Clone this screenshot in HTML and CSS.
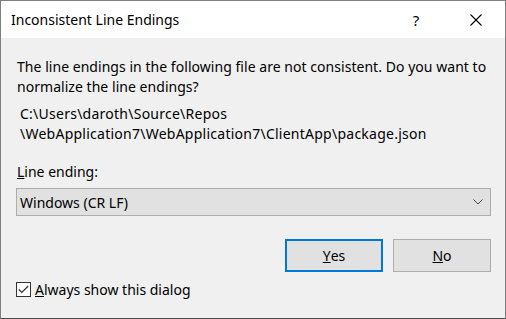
FILE: index.html
```html
<!DOCTYPE html>
<html>
<head>
<meta charset="utf-8">
<link rel="stylesheet" href="styles.css">
</head>
<body>
<div class="window">
  <div class="titlebar">
    <div class="title">Inconsistent Line Endings</div>
    <div class="caption-btn help">?</div>
    <div class="caption-btn close">
      <svg width="12" height="12" viewBox="0 0 12 12"><path d="M0.5 0.5 L11.5 11.5 M11.5 0.5 L0.5 11.5" stroke="#000" stroke-width="1.1" fill="none"/></svg>
    </div>
  </div>
  <div class="content">
    <p class="message">The line endings in the following file are not consistent. Do you want to normalize the line endings?</p>
    <p class="path">C:\Users\daroth\Source\Repos<br>\WebApplication7\WebApplication7\ClientApp\package.json</p>
    <div class="label"><u>L</u>ine ending:</div>
    <div class="combo">
      <span>Windows (CR LF)</span>
      <svg width="10" height="6" viewBox="0 0 10 6"><path d="M0.5 0.5 L5 5 L9.5 0.5" stroke="#444" stroke-width="1" fill="none"/></svg>
    </div>
    <div class="buttons">
      <div class="btn default"><u>Y</u>es</div>
      <div class="btn"><u>N</u>o</div>
    </div>
    <div class="check-row">
      <div class="checkbox">
        <svg width="11" height="9" viewBox="0 0 11 9"><path d="M0.8 4.5 L3.8 7.5 L10.2 1" stroke="#333" stroke-width="1.2" fill="none"/></svg>
      </div>
      <span><u>A</u>lways show this dialog</span>
    </div>
  </div>
</div>
</body>
</html>
```
FILE: styles.css
```css
html, body {
  margin: 0;
  padding: 0;
}
body {
  font-family: "Noto Sans", "Open Sans", sans-serif;
  font-size: 14px;
  color: #000;
}
.window {
  width: 506px;
  height: 319px;
  box-sizing: border-box;
  border: 1px solid #7f7f7f;
  border-bottom-color: #4a4a4a;
  background: #f0f0f0;
  display: flex;
  flex-direction: column;
}
.titlebar {
  height: 37px;
  background: #fff;
  display: flex;
  align-items: center;
  flex-shrink: 0;
}
.title {
  flex: 1;
  padding-left: 10px;
  font-size: 14px;
  color: #000;
}
.caption-btn {
  width: 58px;
  height: 37px;
  display: flex;
  align-items: center;
  justify-content: center;
}
.help {
  font-size: 15px;
  padding-right: 4px;
  box-sizing: border-box;
}
.content {
  padding: 19px 14px 0 15px;
  display: flex;
  flex-direction: column;
}
.message {
  margin: 0;
  line-height: 20px;
  padding-left: 1px;
  letter-spacing: 0.04px;
}
.path {
  margin: 7px 0 0 0;
  line-height: 20px;
  padding-left: 4px;
  letter-spacing: 0.25px;
}
.label {
  margin-top: 18px;
  line-height: 20px;
  padding-left: 1px;
}
.combo {
  margin-top: 6px;
  height: 28px;
  box-sizing: border-box;
  border: 1px solid #adadad;
  background: #e1e1e1;
  display: flex;
  align-items: center;
  justify-content: space-between;
  padding: 0 7px 0 3px;
}
.buttons {
  margin-top: 23px;
  display: flex;
  justify-content: flex-end;
  gap: 10px;
}
.btn {
  width: 98px;
  height: 33px;
  box-sizing: border-box;
  border: 1px solid #adadad;
  background: #e1e1e1;
  display: flex;
  align-items: center;
  justify-content: center;
}
.btn.default {
  border: 2px solid #0078d7;
}
.check-row {
  margin-top: 8px;
  display: flex;
  align-items: center;
  gap: 4px;
}
.checkbox {
  width: 13px;
  height: 13px;
  border: 1px solid #333;
  background: #fff;
  display: flex;
  align-items: center;
  justify-content: center;
}
```
